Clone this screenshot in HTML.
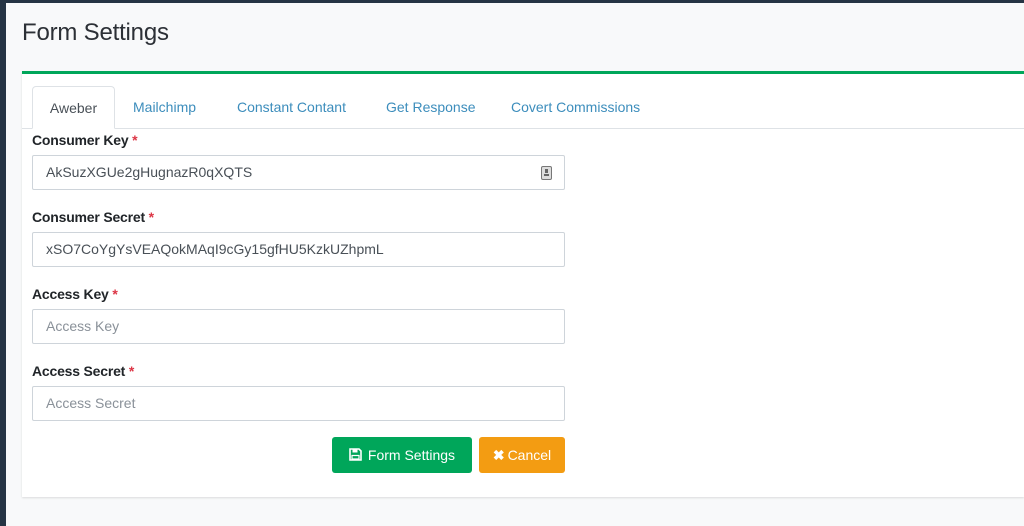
<!DOCTYPE html>
<html><head><style>
*{box-sizing:border-box;margin:0;padding:0}
body{width:1024px;height:526px;overflow:hidden;background:#f4f6f9;font-family:"Liberation Sans",sans-serif;position:relative}
.top{position:absolute;left:0;top:0;width:1024px;height:3px;background:#253444}
.left{position:absolute;left:0;top:0;width:6px;height:526px;background:#253444}
.main{position:absolute;left:6px;top:3px;right:0;bottom:0;background:#f8f9fa}
h1{position:absolute;left:22px;top:19px;font-weight:normal;font-size:24px;color:#2c3036;letter-spacing:-0.2px}
.card{position:absolute;left:22px;top:71px;width:1002px;height:426px;background:#fff;border-top:3px solid #00a65a;box-shadow:0 1px 2px rgba(0,0,0,.12)}
.tabs{position:absolute;left:0;top:12px;width:100%;height:43px;border-bottom:1px solid #dee2e6}
.tab{position:absolute;top:0;height:43px;line-height:42px;font-size:14px;color:#3c8dbc}
.tab.act{left:10px;width:83px;border:1px solid #dee2e6;border-bottom:1px solid #fff;border-radius:4px 4px 0 0;background:#fff;color:#495057;text-align:center}
label{position:absolute;left:10px;font-weight:bold;font-size:14px;color:#212529;letter-spacing:-0.2px}
label span{color:#dc3545}
.in{position:absolute;left:10px;width:533px;height:35px;border:1px solid #ced4da;border-radius:2px;font-size:14px;color:#495057;padding-left:13px;line-height:33px}
.ph{color:#8a9199}
.btn{position:absolute;top:363px;height:36px;border-radius:3px;color:#fff;font-size:14px;line-height:36px;text-align:center}
</style></head><body>
<div class="top"></div><div class="left"></div>
<div class="main"></div>
<h1>Form Settings</h1>
<div class="card">
<div class="tabs">
<div class="tab act">Aweber</div>
<div class="tab" style="left:111px">Mailchimp</div>
<div class="tab" style="left:215px">Constant Contant</div>
<div class="tab" style="left:364px">Get Response</div>
<div class="tab" style="left:489px">Covert Commissions</div>
</div>
<label style="top:58px">Consumer Key <span>*</span></label>
<div class="in" style="top:81px">AkSuzXGUe2gHugnazR0qXQTS<svg style="position:absolute;right:12px;top:10px" width="11" height="14"><rect x="0.5" y="0.5" width="10" height="13" rx="1.5" fill="#ddd" stroke="#777"/><rect x="4" y="3" width="3" height="4" fill="#666"/><rect x="3" y="8" width="5" height="2" fill="#666"/></svg></div>
<label style="top:135px">Consumer Secret <span>*</span></label>
<div class="in" style="top:158px">xSO7CoYgYsVEAQokMAqI9cGy15gfHU5KzkUZhpmL</div>
<label style="top:212px">Access Key <span>*</span></label>
<div class="in ph" style="top:235px">Access Key</div>
<label style="top:289px">Access Secret <span>*</span></label>
<div class="in ph" style="top:312px">Access Secret</div>
<div class="btn" style="left:310px;width:140px;background:#00a65a"><svg width="13" height="13" viewBox="0 0 13 13" style="vertical-align:-1px;margin-right:6px"><path d="M1 1h9l2 2v9H1z" fill="none" stroke="#fff" stroke-width="1.6"/><rect x="3.5" y="1.5" width="5" height="3" fill="#fff"/><rect x="3" y="7.5" width="7" height="3.5" fill="none" stroke="#fff" stroke-width="1.2"/></svg>Form Settings</div>
<div class="btn" style="left:457px;width:86px;background:#f39c12"><b style="margin-right:3px">✖</b>Cancel</div>
</div>
</body></html>
